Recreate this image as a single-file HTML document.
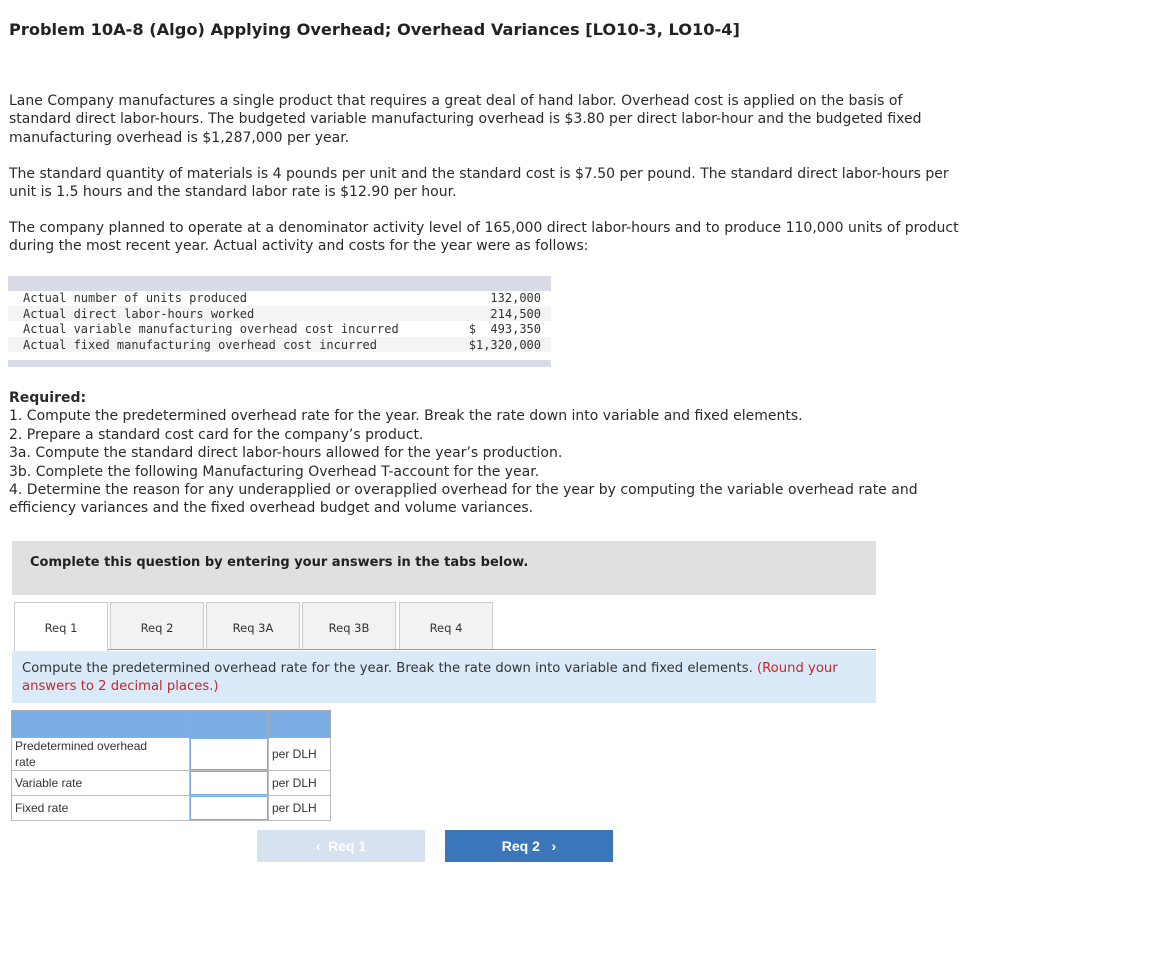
<!DOCTYPE html>
<html><head><style>
body{margin:0;background:#fff;font-family:"Liberation Sans",Arial,sans-serif;color:#222;width:1165px;height:974px;position:relative;overflow:hidden}
.a{position:absolute;white-space:nowrap}
h1{position:absolute;left:9px;top:20px;margin:0;font-family:"DejaVu Sans",sans-serif;font-size:16.2px;font-weight:bold;color:#222}
.p{position:absolute;left:9px;font-family:"DejaVu Sans",sans-serif;font-size:14px;line-height:18.4px;color:#2a2a2a;white-space:nowrap}
.mono{font-family:"DejaVu Sans Mono","Liberation Mono",monospace;font-size:12px;color:#333}
.tab{position:absolute;top:602px;width:94px;height:47px;border:1px solid #ccc;border-bottom:none;background:#f2f2f2;font-family:"DejaVu Sans",sans-serif;font-size:11.5px;text-align:center;line-height:50px;color:#333;box-sizing:border-box}
.v{font-family:"DejaVu Sans",Verdana,sans-serif}
td{border:1px solid #bbb;font-size:12px;color:#333;padding:0 3px;vertical-align:middle}
td.in{border:1px solid #bbb;box-shadow:inset 0 0 0 1px #7aaee4}
</style></head><body>
<h1>Problem 10A-8 (Algo) Applying Overhead; Overhead Variances [LO10-3, LO10-4]</h1>
<div class="p" style="top:92px">Lane Company manufactures a single product that requires a great deal of hand labor. Overhead cost is applied on the basis of<br>standard direct labor-hours. The budgeted variable manufacturing overhead is $3.80 per direct labor-hour and the budgeted fixed<br>manufacturing overhead is $1,287,000 per year.</div>
<div class="p" style="top:165px">The standard quantity of materials is 4 pounds per unit and the standard cost is $7.50 per pound. The standard direct labor-hours per<br>unit is 1.5 hours and the standard labor rate is $12.90 per hour.</div>
<div class="p" style="top:219px">The company planned to operate at a denominator activity level of 165,000 direct labor-hours and to produce 110,000 units of product<br>during the most recent year. Actual activity and costs for the year were as follows:</div>

<div class="a" style="left:8px;top:276px;width:543px;height:15px;background:#d9dce6"></div>
<div class="a" style="left:8px;top:306px;width:543px;height:15px;background:#f4f4f4"></div>
<div class="a" style="left:8px;top:337px;width:543px;height:15px;background:#f4f4f4"></div>
<div class="a" style="left:8px;top:360px;width:543px;height:7px;background:#d9dce6"></div>
<div class="a mono" style="left:23px;top:291px;line-height:15.5px">Actual number of units produced<br>Actual direct labor-hours worked<br>Actual variable manufacturing overhead cost incurred<br>Actual fixed manufacturing overhead cost incurred</div>
<div class="a mono" style="left:430px;width:111px;text-align:right;top:291px;line-height:15.5px;white-space:pre">132,000
214,500
$  493,350
$1,320,000</div>

<div class="p" style="top:389px"><b>Required:</b><br>1. Compute the predetermined overhead rate for the year. Break the rate down into variable and fixed elements.<br>2. Prepare a standard cost card for the company’s product.<br>3a. Compute the standard direct labor-hours allowed for the year’s production.<br>3b. Complete the following Manufacturing Overhead T-account for the year.<br>4. Determine the reason for any underapplied or overapplied overhead for the year by computing the variable overhead rate and<br>efficiency variances and the fixed overhead budget and volume variances.</div>

<div class="a v" style="left:12px;top:541px;width:864px;height:54px;background:#e0e0e0"></div>
<div class="a v" style="left:30px;top:555px;font-size:13px;font-weight:bold;color:#222">Complete this question by entering your answers in the tabs below.</div>

<div class="tab" style="left:14px;background:#fff;height:49px">Req 1</div>
<div class="tab" style="left:110px">Req 2</div>
<div class="tab" style="left:206px">Req 3A</div>
<div class="tab" style="left:302px">Req 3B</div>
<div class="tab" style="left:399px">Req 4</div>
<div class="a" style="left:108px;top:649px;width:768px;height:1px;background:#999"></div>

<div class="a v" style="left:12px;top:651px;width:864px;height:52px;background:#dbeaf8"></div>
<div class="a v" style="left:22px;top:660px;font-size:13.2px;line-height:17.5px;color:#333">Compute the predetermined overhead rate for the year. Break the rate down into variable and fixed elements. <span style="color:#c0282d">(Round your<br>answers to 2 decimal places.)</span></div>

<table style="position:absolute;left:11px;top:710px;border-collapse:collapse;width:320px">
<tr style="height:27px;background:#7aaee4"><td style="width:171px;border-color:#aaa"></td><td style="width:72px;border-color:#aaa"></td><td style="border-color:#aaa"></td></tr>
<tr style="height:31px"><td style="line-height:16px">Predetermined overhead<br>rate</td><td class="in"></td><td>per DLH</td></tr>
<tr style="height:25px"><td>Variable rate</td><td class="in"></td><td>per DLH</td></tr>
<tr style="height:25px"><td>Fixed rate</td><td class="in"></td><td>per DLH</td></tr>
</table>

<div class="a" style="left:257px;top:830px;width:168px;height:32px;background:#d6e2f0;color:#fff;font-weight:bold;font-size:14px;line-height:32px;text-align:center">‹&nbsp;&nbsp;Req 1</div>
<div class="a" style="left:445px;top:830px;width:168px;height:32px;background:#3b76bb;color:#fff;font-weight:bold;font-size:14px;line-height:32px;text-align:center">Req 2&nbsp;&nbsp;&nbsp;›</div>
</body></html>
